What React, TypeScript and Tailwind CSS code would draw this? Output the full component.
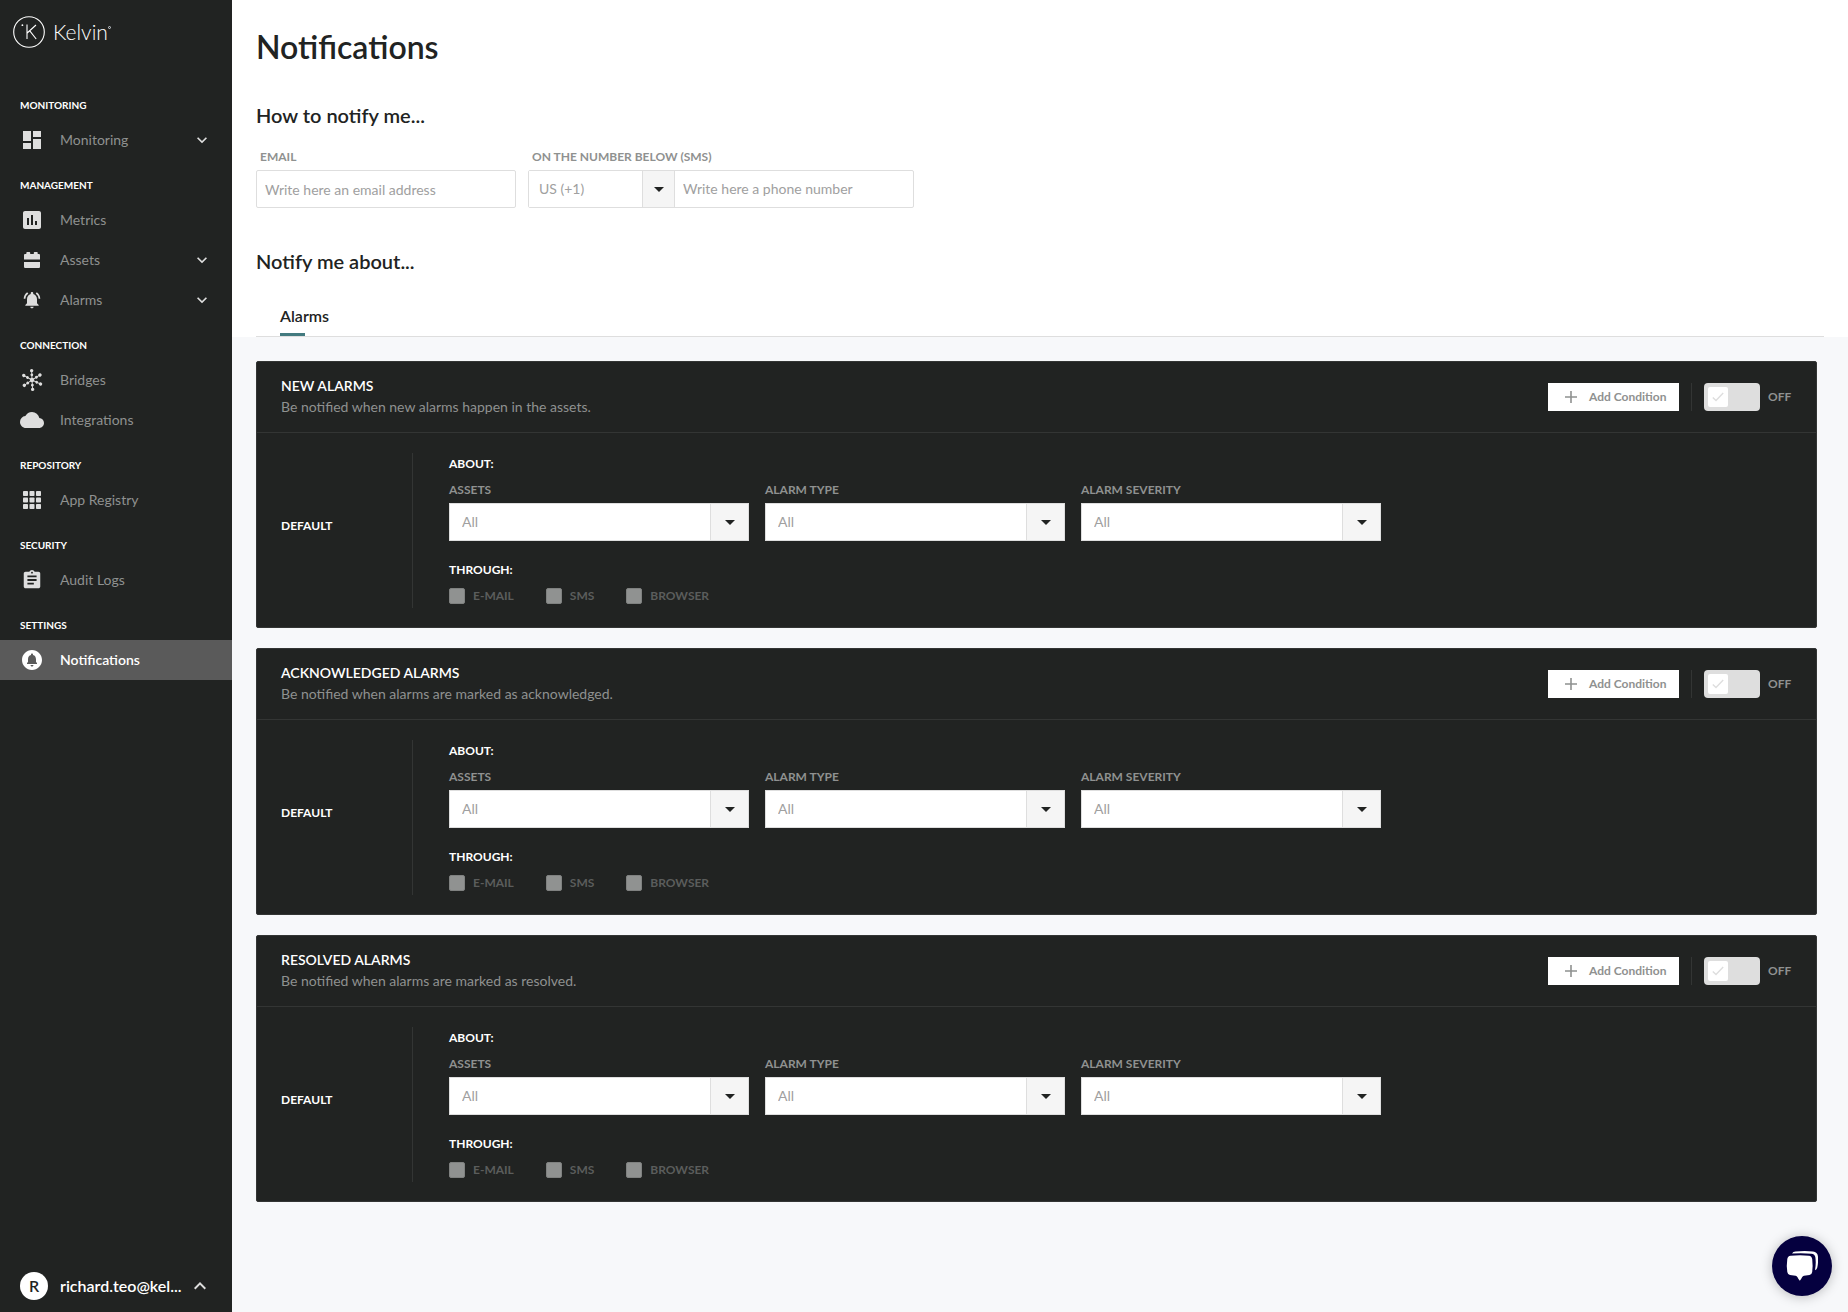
import { useState } from "react";
import type { ReactNode } from "react";
import {
  MdDashboard,
  MdAssessment,
  MdNotificationsActive,
  MdCloud,
  MdAssignment,
  MdCircleNotifications,
} from "react-icons/md";

function Logo() {
  return (
    <a href="#" className="flex items-center gap-2 text-white" aria-label="Kelvin">
      <svg width="32" height="32" viewBox="0 0 32 32" fill="none" stroke="currentColor">
        <circle cx="16" cy="16" r="15.3" strokeWidth="1.1" />
        <path d="M14 8.5v14.5M23 9l-8.800 8M16.800 14.800l6.400 8.200" strokeWidth="1.1" />
        <circle cx="9.4" cy="9.2" r="0.9" fill="currentColor" stroke="none" />
      </svg>
      <span className="flex items-start text-[21px] leading-7 font-light">
        Kelvin
        <span className="mt-2 size-[3px] rounded-full border border-gray-300" />
      </span>
    </a>
  );
}

function BrickIcon() {
  return (
    <svg width="24" height="24" viewBox="0 0 24 24" fill="currentColor">
      <path d="M4 11V7.2C4 6.5 4.500 6 5.200 6H6.300V5C6.300 4.400 6.700 4 7.200 4H9.200C9.800 4 10.200 4.400 10.200 5V6H13.800V5C13.800 4.400 14.200 4 14.800 4H16.800C17.300 4 17.700 4.400 17.700 5V6H18.800C19.500 6 20 6.500 20 7.200V11Z" />
      <path d="M4 14H20V18.700C20 19.400 19.400 20 18.700 20H5.300C4.600 20 4 19.400 4 18.700Z" />
      <path d="M4 11H20V12H4Z" opacity="0.5" />
    </svg>
  );
}

const spokes = [-92, -32, 25, 86, 145, 209];

function HubIcon() {
  return (
    <svg width="24" height="24" viewBox="0 0 24 24" fill="currentColor" stroke="currentColor">
      <circle cx="12" cy="12" r="2.200" stroke="none" />
      {spokes.map((angle) => (
        <g key={angle} transform={`rotate(${angle} 12 12)`}>
          <path d="M12 12H21" strokeWidth="0.900" />
          <circle cx="17.200" cy="12" r="1.400" stroke="none" />
          <circle cx="21.400" cy="12" r="1.700" stroke="none" />
        </g>
      ))}
    </svg>
  );
}

function AppsIcon() {
  return (
    <svg width="24" height="24" viewBox="0 0 24 24" fill="currentColor">
      {[3, 9.5, 16].map((y) =>
        [3, 9.5, 16].map((x) => <rect key={`${x}-${y}`} x={x} y={y} width="5" height="5" rx="0.8" />),
      )}
    </svg>
  );
}

function Chevron({ up = false }: { up?: boolean }) {
  return (
    <svg width={up ? "24" : "20"} height={up ? "24" : "20"} viewBox="0 0 24 24" fill="currentColor">
      {up ? (
        <path d="M7.410 15.410L12 10.830L16.590 15.410L18 14L12 8L6 14Z" />
      ) : (
        <path d="M7.410 8.580L12 13.170L16.590 8.580L18 10L12 16L6 10Z" />
      )}
    </svg>
  );
}

type Item = { label: string; icon: ReactNode; expandable?: boolean; active?: boolean };

const nav: { title: string; items: Item[] }[] = [
  { title: "MONITORING", items: [{ label: "Monitoring", icon: <MdDashboard size={24} />, expandable: true }] },
  {
    title: "MANAGEMENT",
    items: [
      { label: "Metrics", icon: <MdAssessment size={24} /> },
      { label: "Assets", icon: <BrickIcon />, expandable: true },
      { label: "Alarms", icon: <MdNotificationsActive size={20} />, expandable: true },
    ],
  },
  {
    title: "CONNECTION",
    items: [
      { label: "Bridges", icon: <HubIcon /> },
      { label: "Integrations", icon: <MdCloud size={24} /> },
    ],
  },
  { title: "REPOSITORY", items: [{ label: "App Registry", icon: <AppsIcon /> }] },
  { title: "SECURITY", items: [{ label: "Audit Logs", icon: <MdAssignment size={22} /> }] },
  { title: "SETTINGS", items: [{ label: "Notifications", icon: <MdCircleNotifications size={24} />, active: true }] },
];

function NavItem({ label, icon, expandable, active }: Item) {
  return (
    <a
      href="#"
      aria-current={active ? "page" : undefined}
      className={
        active
          ? "flex h-10 items-center gap-4 bg-[#5a5a5a] px-5 text-sm font-semibold text-white"
          : "flex h-10 items-center gap-4 px-5 text-sm text-[#8f9190]"
      }
    >
      <span className={active ? "flex w-6 justify-center text-white" : "flex w-6 justify-center text-[#dedede]"}>
        {icon}
      </span>
      <span className="flex-1">{label}</span>
      {expandable && (
        <span className="text-[#dedede]">
          <Chevron />
        </span>
      )}
    </a>
  );
}

function Sidebar() {
  return (
    <aside className="flex w-[232px] shrink-0 flex-col bg-[#212322]">
      <div className="flex h-20 items-start px-[13px] pt-4">
        <Logo />
      </div>
      <nav>
        {nav.map((section) => (
          <div key={section.title}>
            <h2 className="h-10 pt-4 pl-5 text-[10px] leading-[18px] font-bold text-white">{section.title}</h2>
            {section.items.map((item) => (
              <NavItem key={item.label} {...item} />
            ))}
          </div>
        ))}
      </nav>
      <button type="button" className="mt-auto mb-3 flex items-center px-5 text-white">
        <span className="flex size-7 shrink-0 items-center justify-center rounded-full bg-white text-base font-semibold text-[#212322]">
          R
        </span>
        <span className="flex-1 pl-3 text-left text-base leading-6 font-semibold">richard.teo@kel...</span>
        <span className="text-[#dedede]">
          <Chevron up />
        </span>
      </button>
    </aside>
  );
}

function Caret() {
  return (
    <svg width="10" height="5" viewBox="0 0 10 5" className="fill-[#212322]">
      <path d="M0 0H10L5 5Z" />
    </svg>
  );
}

function FilterSelect({ id, label }: { id: string; label: string }) {
  return (
    <div className="w-[300px]">
      <label htmlFor={id} className="block text-xs leading-4 font-bold text-[#8f9190]">
        {label}
      </label>
      <div className="relative mt-[5px]">
        <select
          id={id}
          className="block h-[38px] w-full appearance-none border border-[#dedede] bg-white px-3 text-sm text-[#a0a0a0]"
        >
          <option>All</option>
        </select>
        <span className="pointer-events-none absolute inset-y-px right-px flex w-[38px] items-center justify-center border-l border-[#dedede] bg-[#f5f5f5]">
          <Caret />
        </span>
      </div>
    </div>
  );
}

function Channel({ label }: { label: string }) {
  return (
    <label className="flex items-center gap-2 text-xs leading-4 font-bold text-[#5b5d5c]">
      <input
        type="checkbox"
        disabled
        className="size-4 appearance-none rounded-xs border border-[#7f8180] bg-[#909291]"
      />
      {label}
    </label>
  );
}

function AlarmCard({ id, title, text }: { id: string; title: string; text: string }) {
  const [on, setOn] = useState(false);
  return (
    <section className="rounded-xs border border-[#333534] bg-[#212322]">
      <header className="flex h-[71px] items-center border-b border-[#333534] px-6">
        <div className="flex-1 pb-[2px]">
          <h3 className="text-sm leading-[21px] font-semibold text-white">{title}</h3>
          <p className="text-sm leading-[21px] text-[#8f9190]">{text}</p>
        </div>
        <button
          type="button"
          className="flex h-7 w-[131px] items-center gap-3 bg-white pl-[17px] text-xs font-bold whitespace-nowrap text-[#8f9190]"
        >
          <svg width="12" height="12" viewBox="0 0 12 12" className="fill-[#8f9190]">
            <path d="M5.200 0H6.800V5.200H12V6.800H6.800V12H5.200V6.800H0V5.200H5.200Z" />
          </svg>
          Add Condition
        </button>
        <span className="mx-3 h-7 w-px bg-[#333534]" />
        <label className="flex cursor-pointer items-center gap-2 text-xs font-bold text-[#8f9190]">
          <input
            type="checkbox"
            role="switch"
            checked={on}
            onChange={() => setOn(!on)}
            className="peer sr-only"
          />
          <span className="flex h-7 w-14 rounded bg-[#dedede] p-1 peer-checked:justify-end">
            <span className="flex size-5 items-center justify-center rounded-xs bg-white">
              <svg width="12" height="10" viewBox="0 0 12 10" fill="none" stroke="#dedede" strokeWidth="1.400">
                <path d="M0.800 5.500L4 8.600L11.200 1" />
              </svg>
            </span>
          </span>
          <span className="w-6">{on ? "ON" : "OFF"}</span>
        </label>
      </header>
      <div className="flex px-6 pt-5 pb-[19px]">
        <div className="flex w-[132px] items-center border-r border-[#333534] pb-[10px] text-xs font-bold text-white">
          DEFAULT
        </div>
        <div className="flex-1 pl-9">
          <h4 className="pt-[3px] text-xs leading-4 font-bold text-white">ABOUT:</h4>
          <div className="mt-[10px] flex gap-4">
            <FilterSelect id={`${id}-assets`} label="ASSETS" />
            <FilterSelect id={`${id}-type`} label="ALARM TYPE" />
            <FilterSelect id={`${id}-severity`} label="ALARM SEVERITY" />
          </div>
          <h4 className="mt-[21px] text-xs leading-4 font-bold text-white">THROUGH:</h4>
          <div className="mt-[10px] flex gap-8 pb-1">
            <Channel label="E-MAIL" />
            <Channel label="SMS" />
            <Channel label="BROWSER" />
          </div>
        </div>
      </div>
    </section>
  );
}

function NotifyForm() {
  return (
    <form className="mt-5 flex gap-3">
      <div className="w-[260px]">
        <label htmlFor="email" className="block pl-1 text-xs leading-4 font-bold text-[#8f9190]">
          EMAIL
        </label>
        <input
          id="email"
          type="email"
          placeholder="Write here an email address"
          className="mt-[5px] block h-[38px] w-full rounded-xs border border-[#dedede] bg-white px-2 text-sm placeholder:text-[#a0a0a0]"
        />
      </div>
      <div className="w-[386px]">
        <label htmlFor="phone" className="block pl-1 text-xs leading-4 font-bold text-[#8f9190]">
          ON THE NUMBER BELOW (SMS)
        </label>
        <div className="mt-[5px] flex h-[38px] rounded-xs border border-[#dedede]">
          <div className="relative w-[146px]">
            <select
              aria-label="Country code"
              className="block h-9 w-full appearance-none bg-white px-[10px] text-sm text-[#a0a0a0]"
            >
              <option>US (+1)</option>
            </select>
            <span className="pointer-events-none absolute inset-y-0 right-0 flex w-[33px] items-center justify-center border-x border-[#dedede] bg-[#f5f5f5]">
              <Caret />
            </span>
          </div>
          <input
            id="phone"
            type="tel"
            placeholder="Write here a phone number"
            className="min-w-0 flex-1 px-2 text-sm placeholder:text-[#a0a0a0]"
          />
        </div>
      </div>
    </form>
  );
}

const cards = [
  { id: "new", title: "NEW ALARMS", text: "Be notified when new alarms happen in the assets." },
  { id: "ack", title: "ACKNOWLEDGED ALARMS", text: "Be notified when alarms are marked as acknowledged." },
  { id: "resolved", title: "RESOLVED ALARMS", text: "Be notified when alarms are marked as resolved." },
];

export default function App() {
  return (
    <div className="flex min-h-screen bg-[#f7f8fa] font-['Lato',sans-serif] text-[#212322]">
      <Sidebar />
      <main className="min-w-0 flex-1">
        <div className="bg-white px-6 pt-6">
          <h1 className="text-[32px] leading-[45px] font-semibold">Notifications</h1>
          <h2 className="mt-8 text-xl leading-7 font-semibold">How to notify me...</h2>
          <NotifyForm />
          <h2 className="mt-[39px] text-xl leading-7 font-semibold">Notify me about...</h2>
          <div role="tablist" className="mt-[27px] flex border-b border-[#dedede] px-6">
            <button type="button" role="tab" aria-selected="true" className="text-left text-base leading-7 font-semibold">
              Alarms
              <span className="mt-[3px] block h-[3px] w-[25px] bg-[#437a7f]" />
            </button>
          </div>
        </div>
        <div className="flex flex-col gap-5 py-6 pr-[31px] pl-6">
          {cards.map((card) => (
            <AlarmCard key={card.id} {...card} />
          ))}
        </div>
      </main>
      <button
        type="button"
        aria-label="Open chat"
        className="fixed right-4 bottom-4 flex size-[60px] items-center justify-center rounded-full bg-[#05003f] shadow-[0_1px_12px_rgba(0,0,0,0.25)]"
      >
        <svg width="32" height="32" viewBox="0 0 32 32" className="fill-white">
          <path d="M4.500 5.700Q14 4.800 23 5.700Q25.700 6 26.200 9Q27 15.500 26.200 22Q25.800 24.700 23.500 25L18 25.700C16.300 25.900 16 28 13.800 30.800C11.600 28 11.300 25.900 9.600 25.700L4 25Q1.700 24.700 1.300 22Q0.300 15.500 1.300 9Q1.800 6 4.500 5.700Z" />
          <path d="M6 3.500Q7 1.700 9.500 1.500Q19 0.700 27 1.500Q31.400 2 31.900 6Q32.500 12 31.300 17.500Q30.800 19.800 29 20.300Q30.300 12.500 29.300 7Q28.700 4 25.500 3.700Q16 2.700 6 3.500Z" />
        </svg>
      </button>
    </div>
  );
}
